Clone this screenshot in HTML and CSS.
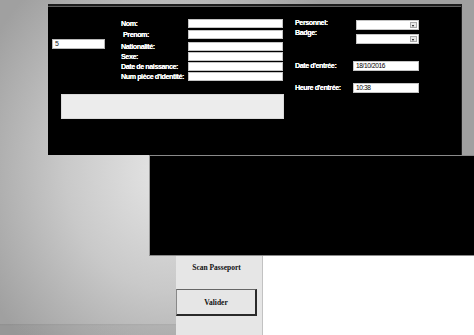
FILE: index.html
```html
<!DOCTYPE html>
<html lang="fr">
<head>
<meta charset="utf-8">
<title>Enregistrement visiteur</title>
<link rel="stylesheet" href="styles.css">
</head>
<body>
<div class="screen">
  <section class="form-panel">
    <div class="upper">
      <div class="idbox">5</div>
      <div class="fields">
        <span class="lbl">Nom:</span><span class="inp"></span>
        <span class="lbl indent">Prenom:</span><span class="inp"></span>
        <span class="lbl">Nationalité:</span><span class="inp"></span>
        <span class="lbl">Sexe:</span><span class="inp"></span>
        <span class="lbl">Date de naissance:</span><span class="inp"></span>
        <span class="lbl">Num pièce d'identité:</span><span class="inp"></span>
      </div>
      <div class="extra">
        <span class="lbl first">Personnel:</span>
        <span class="sel"><span class="drop"></span></span>
        <span class="lbl second">Badge:</span>
        <span class="sel"><span class="drop"></span></span>
        <span class="lbl">Date d'entrée:</span>
        <span class="inp val">18/10/2016</span>
        <span class="lbl">Heure d'entrée:</span>
        <span class="inp val">10:38</span>
      </div>
    </div>
    <div class="notes"></div>
  </section>
  <section class="scan-panel"></section>
  <div class="footer">
    <div class="spacer"></div>
    <div class="sidebar">
      <div class="scan-title">Scan Passeport</div>
      <div class="btn">Valider</div>
    </div>
    <div class="blank"></div>
  </div>
</div>
</body>
</html>
```
FILE: styles.css
```css
* { box-sizing: border-box; }
html, body { margin: 0; padding: 0; }
body {
  width: 474px;
  height: 335px;
  overflow: hidden;
  background:
    linear-gradient(to bottom, transparent 324px, rgba(0,0,0,0.10) 324px, rgba(0,0,0,0.06) 326px),
    radial-gradient(ellipse 210px 240px at 170px 170px, #e6e6e6 0%, #c9c9c9 50%, #a0a0a0 100%);
  font-family: "Liberation Sans", Arial, sans-serif;
}
.screen { padding-top: 4px; }

.form-panel {
  margin-left: 48px;
  width: 414px;
  height: 151px;
  background: #000;
  border-top: 2px solid #1c1c1c;
  border-right: 1px solid #222;
}
.form-panel::before {
  content: "";
  display: block;
  height: 1px;
  background: #5e5e5e;
}
.upper {
  display: flex;
  align-items: flex-start;
  margin-top: 12px;
  padding-left: 4px;
}
.idbox {
  width: 53px;
  height: 10px;
  margin-top: 20px;
  background: #fff;
  border: 1px solid #b8b8b8;
  font-size: 7px;
  line-height: 8px;
  padding-left: 2px;
  color: #222;
}
.fields {
  margin-left: 16px;
  display: grid;
  grid-template-columns: 67px 95px;
  grid-template-rows: 11px 12px 10px 10px 10px 10px;
  align-items: start;
}
.lbl {
  color: #fff;
  font-weight: bold;
  font-size: 7.2px;
  letter-spacing: -0.45px;
  line-height: 9px;
  white-space: nowrap;
  text-shadow: 0 0 0.4px #fff;
}
.indent { padding-left: 2px; }
.inp {
  display: block;
  height: 9px;
  background: #fff;
  border: 1px solid #c4c4c4;
}
.fields .inp { height: 8.5px; }
.extra {
  margin-left: 12px;
  margin-top: 1px;
  display: grid;
  grid-template-columns: 58px 66px;
  grid-template-rows: 14px 27px 22px 10px;
  align-items: start;
}
.extra .lbl { line-height: 10px; }
.extra .lbl.first { margin-top: -2px; }
.extra .lbl.second { margin-top: -6px; }
.sel {
  display: flex;
  justify-content: flex-end;
  margin-left: 3px;
  width: 63px;
  height: 10px;
  background: #fff;
  border: 1px solid #c4c4c4;
  padding: 1px;
}
.drop {
  width: 7px;
  height: 6px;
  background: #e8e8e8;
  border: 1px solid #aaa;
  position: relative;
}
.drop::after {
  content: "";
  position: absolute;
  left: 1px;
  top: 1.5px;
  border-left: 1.5px solid transparent;
  border-right: 1.5px solid transparent;
  border-top: 2px solid #000;
}
.val {
  height: 10px;
  font-size: 6.6px;
  letter-spacing: -0.4px;
  line-height: 8px;
  padding-left: 2px;
  color: #000;
}
.notes {
  margin-top: 1px;
  margin-left: 13px;
  width: 223px;
  height: 25px;
  background: #ececec;
  border: 1px solid #dadada;
}

.scan-panel {
  margin-left: 149px;
  height: 101px;
  background: #000;
  border-top: 1px solid #8a8a8a;
  border-left: 1px solid #9a9a9a;
  border-bottom: 1px solid #8a8a8a;
}

.footer {
  display: flex;
  margin-left: 150px;
  height: 79px;
}
.spacer { width: 26px; }
.sidebar {
  width: 87px;
  background: #e6e6e6;
  border-right: 1px solid #c2c2c2;
}
.scan-title {
  width: 81px;
  padding-top: 7px;
  text-align: center;
  font-family: "Liberation Serif", "Times New Roman", serif;
  font-weight: bold;
  font-size: 7.5px;
  line-height: 10px;
  color: #111;
}
.btn {
  margin-top: 16px;
  width: 81px;
  height: 27px;
  display: flex;
  align-items: center;
  justify-content: center;
  background: #e6e6e6;
  border-top: 1px solid #666;
  border-left: 1px solid #888;
  border-right: 2px solid #2a2a2a;
  border-bottom: 2px solid #2a2a2a;
  font-family: "Liberation Serif", "Times New Roman", serif;
  font-weight: bold;
  font-size: 7.5px;
  color: #111;
}
.blank { flex: 1; background: #fff; }
```
